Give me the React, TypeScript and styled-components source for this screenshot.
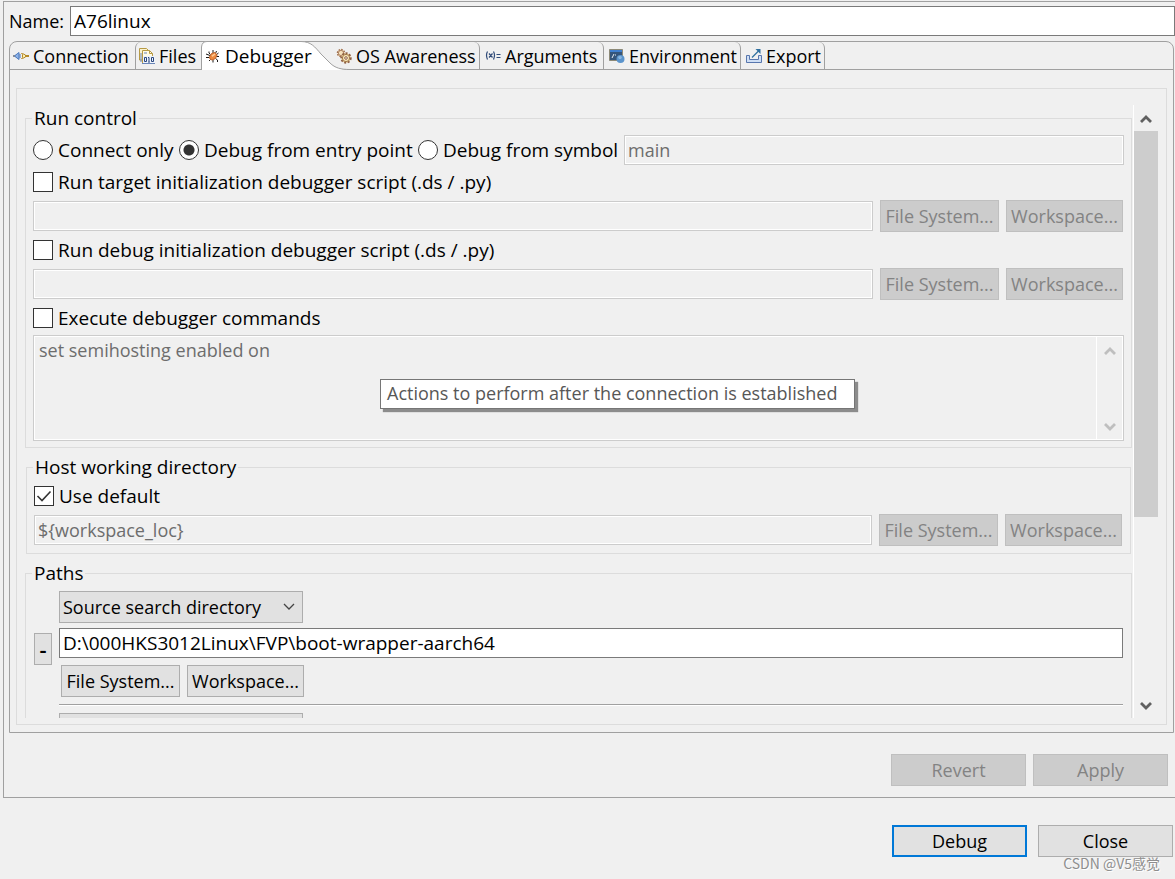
import React from "react";
import styled, { createGlobalStyle, css } from "styled-components";

const GlobalStyle = createGlobalStyle`
  *, *::before, *::after { box-sizing: border-box; }
  html, body { margin: 0; background: #f0f0f0; }
  body, button, input, select, textarea {
    font-family: "Open Sans", "Noto Sans CJK SC", sans-serif;
    font-size: 18px;
    line-height: 24px;
    color: #000;
  }
`;

const Dialog = styled.div`
  position: relative;
  display: flex;
  flex-direction: column;
  height: 100vh;
  min-height: 640px;
  padding: 1px 0 0 3px;
  overflow: hidden;
`;

const Frame = styled.main`
  flex: 1;
  min-height: 0;
  display: flex;
  flex-direction: column;
  border: 1px solid #a0a0a0;
  border-right: 0;
  padding: 4px 1px 11px 5px;
`;

const NameRow = styled.div`
  display: grid;
  grid-template-columns: 61px 1fr;
  align-items: center;
  margin-right: -1px;
`;

const TextField = styled.input`
  display: block;
  width: 100%;
  min-width: 0;
  height: 30px;
  padding: 0 3px;
  border: 1px solid #7a7a7a;
  border-radius: 0;
  background: #fff;
  font-size: 19px;
  outline: none;
  &:disabled {
    border-color: #ccc;
    background: #f0f0f0;
    box-shadow: inset 0 0 0 1px #fff;
    font-size: 18px;
    color: #6d6d6d;
  }
`;

const Folder = styled.section`
  flex: 1;
  min-height: 0;
  display: flex;
  flex-direction: column;
  margin-top: 5px;
  border: 1px solid #a0a0a0;
  border-radius: 8px 8px 0 0;
`;

const TabStrip = styled.div`
  display: flex;
  height: 28px;
  box-shadow: inset 0 -1px 0 #a0a0a0;
`;

const Tab = styled.button<{ $width: number; $edge?: "left" | "right" }>`
  position: relative;
  flex: 0 0 ${(p) => p.$width}px;
  display: flex;
  align-items: center;
  gap: 4px;
  height: 28px;
  margin: 0;
  padding: 0 0 0 3px;
  border: 0 solid #a0a0a0;
  background: none;
  white-space: nowrap;
  ${(p) =>
    p.$edge === "left" &&
    css`
      border-left-width: 1px;
      border-top-left-radius: 6px;
    `}
  ${(p) =>
    p.$edge === "right" &&
    css`
      border-right-width: 1px;
      border-top-right-radius: 6px;
      padding-left: 5px;
    `}
`;

const ActiveShape = styled.svg`
  position: absolute;
  left: 0;
  top: -1px;
  z-index: -1;
`;

const ActiveTab = styled(Tab)`
  z-index: 1;
  padding-left: 4px;
  font-size: 19px;
`;

const Page = styled.div`
  flex: 1;
  min-height: 0;
  display: flex;
  margin: 18px 6px 7px;
  border: 1px solid #dcdcdc;
  padding: 16px 8px 6px;
`;

const Viewport = styled.div`
  flex: 1;
  min-width: 0;
  overflow: hidden;
  display: flex;
  flex-direction: column;
  gap: 7px;
  padding: 1px 1px 0 0;
`;

const Group = styled.fieldset<{ $inset?: boolean }>`
  flex: none;
  min-width: 0;
  margin: 0 ${(p) => (p.$inset ? 1 : 0)}px;
  padding: 5px 7px ${(p) => (p.$inset ? 7 : 6)}px;
  border: 1px solid #dcdcdc;
`;

const Legend = styled.legend`
  padding: 0 2px;
  margin-left: -1px;
  height: 24px;
  font-size: 19px;
`;

const Stack = styled.div`
  display: flex;
  flex-direction: column;
  gap: 6px;
`;

const RunRow = styled.div`
  display: flex;
  align-items: center;
  margin-bottom: -1px;
`;

const Choice = styled.label<{ $width?: number }>`
  flex: none;
  display: flex;
  align-items: center;
  gap: 5px;
  height: 24px;
  font-size: 19px;
  white-space: nowrap;
  ${(p) => p.$width && `width: ${p.$width}px;`}
`;

const Radio = styled.input.attrs({ type: "radio" })`
  appearance: none;
  flex: none;
  width: 20px;
  height: 20px;
  margin: 0;
  border: 1px solid #333;
  border-radius: 50%;
  background: #fff;
  &:checked {
    background: radial-gradient(circle, #333 5px, #fff 6px);
  }
`;

const TickBox = styled.span`
  display: grid;
  width: 20px;
  height: 20px;
  > * {
    grid-area: 1 / 1;
  }
  svg {
    pointer-events: none;
    visibility: hidden;
    z-index: 1;
  }
  input:checked + svg {
    visibility: visible;
  }
`;

const Tick = styled.input.attrs({ type: "checkbox" })`
  appearance: none;
  width: 20px;
  height: 20px;
  margin: 0;
  border: 1px solid #333;
  background: #fff;
`;

const FileRow = styled.div`
  display: grid;
  grid-template-columns: 1fr 119px 117px;
  align-items: center;
  column-gap: 7px;
  padding-right: 1px;
`;

const Button = styled.button<{ $width: number; $primary?: boolean }>`
  flex: none;
  width: ${(p) => p.$width}px;
  height: 32px;
  padding: 0;
  border: ${(p) => (p.$primary ? "2px solid #0078d7" : "1px solid #adadad")};
  border-radius: 0;
  background: #e1e1e1;
  white-space: nowrap;
  &:disabled {
    border-color: #bfbfbf;
    background: #ccc;
    color: #838383;
  }
`;

const RemoveButton = styled(Button)`
  font-size: 22px;
  font-weight: 600;
`;

const CommandBox = styled.div`
  position: relative;
  display: flex;
  height: 106px;
  margin-top: -1px;
  border: 1px solid #ccc;
  padding: 1px;
  box-shadow: inset 0 0 0 1px #fff;
`;

const CommandText = styled.textarea`
  flex: 1;
  min-width: 0;
  padding: 1px 4px;
  border: 0;
  border-right: 1px solid #fff;
  background: none;
  resize: none;
  overflow: hidden;
  color: #6d6d6d;
`;

const ScrollColumn = styled.div<{ $width: number }>`
  flex: 0 0 ${(p) => p.$width}px;
  display: flex;
  flex-direction: column;
  justify-content: space-between;
`;

const ScrollArrow = styled.button`
  display: flex;
  align-items: center;
  justify-content: center;
  flex: none;
  height: 26px;
  padding: 2px 0 0;
  border: 0;
  background: none;
  color: #606060;
  &:disabled {
    color: #bfbfbf;
  }
`;

const PageScroll = styled(ScrollColumn)`
  border-left: 1px solid #fff;
`;

const Thumb = styled.div`
  flex: 11;
  background: #cdcdcd;
`;

const TrackRest = styled.div`
  flex: 5;
`;

const Tooltip = styled.div`
  position: absolute;
  left: 346px;
  top: 43px;
  z-index: 2;
  min-width: 475px;
  height: 30px;
  padding: 1px 6px;
  border: 1px solid #767676;
  background: #fff;
  box-shadow: 3px 3px 1px #8c8c8c;
  color: #575757;
  white-space: nowrap;
`;

const PathList = styled.div`
  display: flex;
  flex-direction: column;
  gap: 7px;
  padding: 1px 1px 0;
`;

const PathEntry = styled.div`
  display: grid;
  grid-template-columns: 18px 1fr;
  column-gap: 7px;
  align-items: center;
`;

const PathBody = styled.div`
  display: flex;
  flex-direction: column;
  gap: 7px;
`;

const PathFields = styled.div`
  display: flex;
  flex-direction: column;
  gap: 5px;
`;

const PathButtons = styled.div`
  display: flex;
  gap: 7px;
  padding-left: 2px;
`;

const Divider = styled.hr`
  width: 100%;
  margin: 0;
  border: 0;
  border-top: 1px solid #a0a0a0;
  border-bottom: 1px solid #fff;
`;

const SelectBox = styled.span`
  display: grid;
  width: 244px;
  > * {
    grid-area: 1 / 1;
  }
  svg {
    align-self: center;
    justify-self: end;
    margin-right: 6px;
    pointer-events: none;
    z-index: 1;
  }
`;

const Select = styled.select`
  appearance: none;
  width: 100%;
  height: 32px;
  padding: 0 3px;
  border: 1px solid #adadad;
  border-radius: 0;
  background: #e1e1e1;
`;

const Actions = styled.div<{ $footer?: boolean }>`
  display: flex;
  justify-content: flex-end;
  gap: ${(p) => (p.$footer ? 11 : 7)}px;
  padding: ${(p) => (p.$footer ? "27px 2px 22px" : "21px 6px 0")};
`;

const Watermark = styled.div`
  position: absolute;
  right: 15px;
  bottom: 6px;
  font-family: "Noto Sans CJK SC", sans-serif;
  font-size: 14px;
  line-height: 20px;
  color: #8e8e8e;
  text-shadow: 1px 1px 0 #fff;
`;

const Icon = ({ children }: { children: React.ReactNode }) => (
  <svg width="16" height="16" viewBox="0 0 16 16" fill="none" aria-hidden="true">
    {children}
  </svg>
);

const ConnectionIcon = () => (
  <Icon>
    <path d="M0 8h2" stroke="#8a8f98" strokeWidth="2" />
    <path d="M2 7.500l4-3v7l-4-3z" fill="#8fb4e8" stroke="#4a78bd" />
    <path d="M7 6v4" stroke="#4a78bd" />
    <path d="M8.500 5.500h1l3 1.500v2l-3 1.500h-1l1-1v-3z" fill="#fdf0b4" stroke="#b58a2a" />
    <path d="M13 8h3" stroke="#b58a2a" strokeWidth="2" />
  </Icon>
);

const FilesIcon = () => (
  <Icon>
    <path d="M.5.500h7l2 2V12h-9z" fill="#fbf3cf" stroke="#b79a45" />
    <path d="M3.500 2.500h7l3 3V15h-10z" fill="#fffbe6" stroke="#b79a45" />
    <path d="M10.500 2.500v3h3" stroke="#b79a45" />
    <path d="M2 5v9M5 5h3" stroke="#6a86b8" />
    <path d="M4 8h12v8H4z" fill="#eef3fb" />
    <path d="M5.500 9.500h2v4h-2zM12.500 9.500h2v4h-2zM9 9.500h1v4M9 14h2" stroke="#28467e" />
    <path d="M3 15.500h13" stroke="#6a86b8" />
  </Icon>
);

const BugIcon = () => (
  <Icon>
    <path
      d="M5.500 6.500L4 5V3.500M8 5V2M10.500 5.500l1-2.500M11 8.500h3M10.500 10.500l2 1.500v2M8 12v2.500M5.500 11.500L4 13M4.500 9.500H1M5 7.500L1 6M11 7l2.500-2"
      stroke="#1d1a18"
    />
    <path d="M4.500 9l2-3.500 3.500-1 2 2.500-1.500 3.500-3.500 1.500-2-1z" fill="#ee8a3e" stroke="#c0632a" />
    <path d="M6.500 7.500l3-2 1 1-3 2.500z" fill="#fbc894" />
  </Icon>
);

const GearsIcon = () => (
  <Icon>
    <circle cx="5" cy="5" r="3.500" fill="#f6e2bd" stroke="#a07050" strokeWidth="1.500" strokeDasharray="1.600 1.100" />
    <circle cx="5" cy="5" r="2.600" fill="#f6e2bd" stroke="#a07050" strokeWidth=".8" />
    <circle cx="10" cy="10" r="4.800" fill="#f3d9a4" stroke="#8e5f45" strokeWidth="1.800" strokeDasharray="2 1.600" />
    <circle cx="10" cy="10" r="3.600" fill="#f8e6b9" stroke="#a07848" />
    <circle cx="10" cy="10" r="1.300" fill="#fff" stroke="#8e5f45" />
  </Icon>
);

const ArgumentsIcon = () => (
  <Icon>
    <path
      d="M2.500 3.500Q.5 7 2.500 11.500M8.500 3.500q2 3.500 0 8M4 5.500l3.500 4M7.500 5.500l-3.500 4M11.500 6.500h4M11.500 9.500h4"
      stroke="#2f4a78"
      strokeWidth="1.200"
    />
  </Icon>
);

const EnvironmentIcon = () => (
  <Icon>
    <path d="M.5 1.500h13v11H.5z" fill="#34557c" stroke="#8d8a78" />
    <path d="M1 2h12v2H1z" fill="#3f7fd0" />
    <path d="M3 10l2-4M6 7h1" stroke="#e8eef6" />
    <circle cx="11.500" cy="11" r="4" fill="#5b94cc" />
    <path d="M9 9q2-2 4 0l-1 2-2 0z" fill="#8ab6e0" />
  </Icon>
);

const ExportIcon = () => (
  <Icon>
    <path d="M3.500 7.500h-3v7h15v-7h-3v4h-9z" fill="#cfdff5" stroke="#5877ae" />
    <path d="M6 9.500l7-7" stroke="#2f6f9f" strokeWidth="1.200" />
    <path d="M9.500 1h5v5z" fill="#2f6f9f" />
  </Icon>
);

const Chevron = ({ down }: { down?: boolean }) => (
  <svg width="12" height="10" viewBox="0 0 12 10" fill="none" aria-hidden="true">
    <path d={down ? "M1 2l5 5 5-5" : "M1 8l5-5 5 5"} stroke="currentColor" strokeWidth="2.800" />
  </svg>
);

const PathSelect = () => (
  <SelectBox>
    <Select aria-label="Path type">
      <option>Source search directory</option>
    </Select>
    <svg width="14" height="8" viewBox="0 0 14 8" fill="none" aria-hidden="true">
      <path d="M1 1l5 5 5-5" stroke="#444" strokeWidth="1.300" />
    </svg>
  </SelectBox>
);

const CheckChoice = ({ label, checked }: { label: string; checked?: boolean }) => (
  <Choice>
    <TickBox>
      <Tick defaultChecked={checked} />
      <svg width="20" height="20" viewBox="0 0 20 20" fill="none" aria-hidden="true">
        <path d="M3.500 10l4.500 4.500 8.500-9" stroke="#333" strokeWidth="1.600" />
      </svg>
    </TickBox>
    {label}
  </Choice>
);

const FilePicker = ({ label, value }: { label: string; value?: string }) => (
  <FileRow>
    <TextField aria-label={label} defaultValue={value} disabled />
    <Button $width={119} disabled>File System...</Button>
    <Button $width={117} disabled>Workspace...</Button>
  </FileRow>
);

export default function App() {
  return (
    <>
      <GlobalStyle />
      <Dialog>
        <Frame>
          <NameRow>
            <label htmlFor="name">Name:</label>
            <TextField id="name" defaultValue="A76linux" />
          </NameRow>
          <Folder>
            <TabStrip role="tablist">
              <Tab role="tab" $width={125}><ConnectionIcon />Connection</Tab>
              <Tab role="tab" $width={66} $edge="left"><FilesIcon />Files</Tab>
              <ActiveTab role="tab" aria-selected="true" $width={130}>
                <ActiveShape width="149" height="29" viewBox="0 0 149 29" fill="none" aria-hidden="true">
                  <path
                    d="M.5 29V6Q1 .5 6 .5H100C110 .5 114 6 120 13L129 22C134 27 140 28.500 146 28.500V29z"
                    fill="#fff"
                  />
                  <path
                    d="M.5 29V6Q1 .5 6 .5H100C110 .5 114 6 120 13L129 22C134 27 140 28.500 149 28.500"
                    stroke="#a0a0a0"
                  />
                </ActiveShape>
                <BugIcon />Debugger
              </ActiveTab>
              <Tab role="tab" $width={149} $edge="right"><GearsIcon />OS Awareness</Tab>
              <Tab role="tab" $width={124} $edge="right"><ArgumentsIcon />Arguments</Tab>
              <Tab role="tab" $width={137} $edge="right"><EnvironmentIcon />Environment</Tab>
              <Tab role="tab" $width={84} $edge="right"><ExportIcon />Export</Tab>
            </TabStrip>
            <Page>
              <Viewport>
                <Group>
                  <Legend>Run control</Legend>
                  <Stack>
                    <RunRow>
                      <Choice $width={146}><Radio name="run" />Connect only</Choice>
                      <Choice $width={239}><Radio name="run" defaultChecked />Debug from entry point</Choice>
                      <Choice $width={206}><Radio name="run" />Debug from symbol</Choice>
                      <TextField aria-label="Symbol" defaultValue="main" disabled />
                    </RunRow>
                    <CheckChoice label="Run target initialization debugger script (.ds / .py)" />
                    <FilePicker label="Target initialization script" />
                    <CheckChoice label="Run debug initialization debugger script (.ds / .py)" />
                    <FilePicker label="Debug initialization script" />
                    <CheckChoice label="Execute debugger commands" />
                    <CommandBox>
                      <CommandText aria-label="Debugger commands" defaultValue="set semihosting enabled on" disabled />
                      <ScrollColumn $width={25}>
                        <ScrollArrow aria-label="Scroll up" disabled><Chevron /></ScrollArrow>
                        <ScrollArrow aria-label="Scroll down" disabled><Chevron down /></ScrollArrow>
                      </ScrollColumn>
                      <Tooltip role="tooltip">Actions to perform after the connection is established</Tooltip>
                    </CommandBox>
                  </Stack>
                </Group>
                <Group $inset>
                  <Legend>Host working directory</Legend>
                  <Stack>
                    <CheckChoice label="Use default" checked />
                    <FilePicker label="Working directory" value="${workspace_loc}" />
                  </Stack>
                </Group>
                <Group>
                  <Legend>Paths</Legend>
                  <PathList>
                    <PathEntry>
                      <RemoveButton $width={18} aria-label="Remove path">-</RemoveButton>
                      <PathBody>
                        <PathFields>
                          <PathSelect />
                          <TextField aria-label="Path" defaultValue="D:\000HKS3012Linux\FVP\boot-wrapper-aarch64" />
                        </PathFields>
                        <PathButtons>
                          <Button $width={119}>File System...</Button>
                          <Button $width={117}>Workspace...</Button>
                        </PathButtons>
                        <Divider />
                      </PathBody>
                    </PathEntry>
                    <PathEntry>
                      <span />
                      <PathSelect />
                    </PathEntry>
                  </PathList>
                </Group>
              </Viewport>
              <PageScroll $width={25}>
                <ScrollArrow aria-label="Scroll page up"><Chevron /></ScrollArrow>
                <Thumb />
                <TrackRest />
                <ScrollArrow aria-label="Scroll page down"><Chevron down /></ScrollArrow>
              </PageScroll>
            </Page>
          </Folder>
          <Actions>
            <Button $width={135} disabled>Revert</Button>
            <Button $width={135} disabled>Apply</Button>
          </Actions>
        </Frame>
        <Actions $footer>
          <Button $width={135} $primary>Debug</Button>
          <Button $width={135}>Close</Button>
        </Actions>
        <Watermark>CSDN @V5感觉</Watermark>
      </Dialog>
    </>
  );
}
